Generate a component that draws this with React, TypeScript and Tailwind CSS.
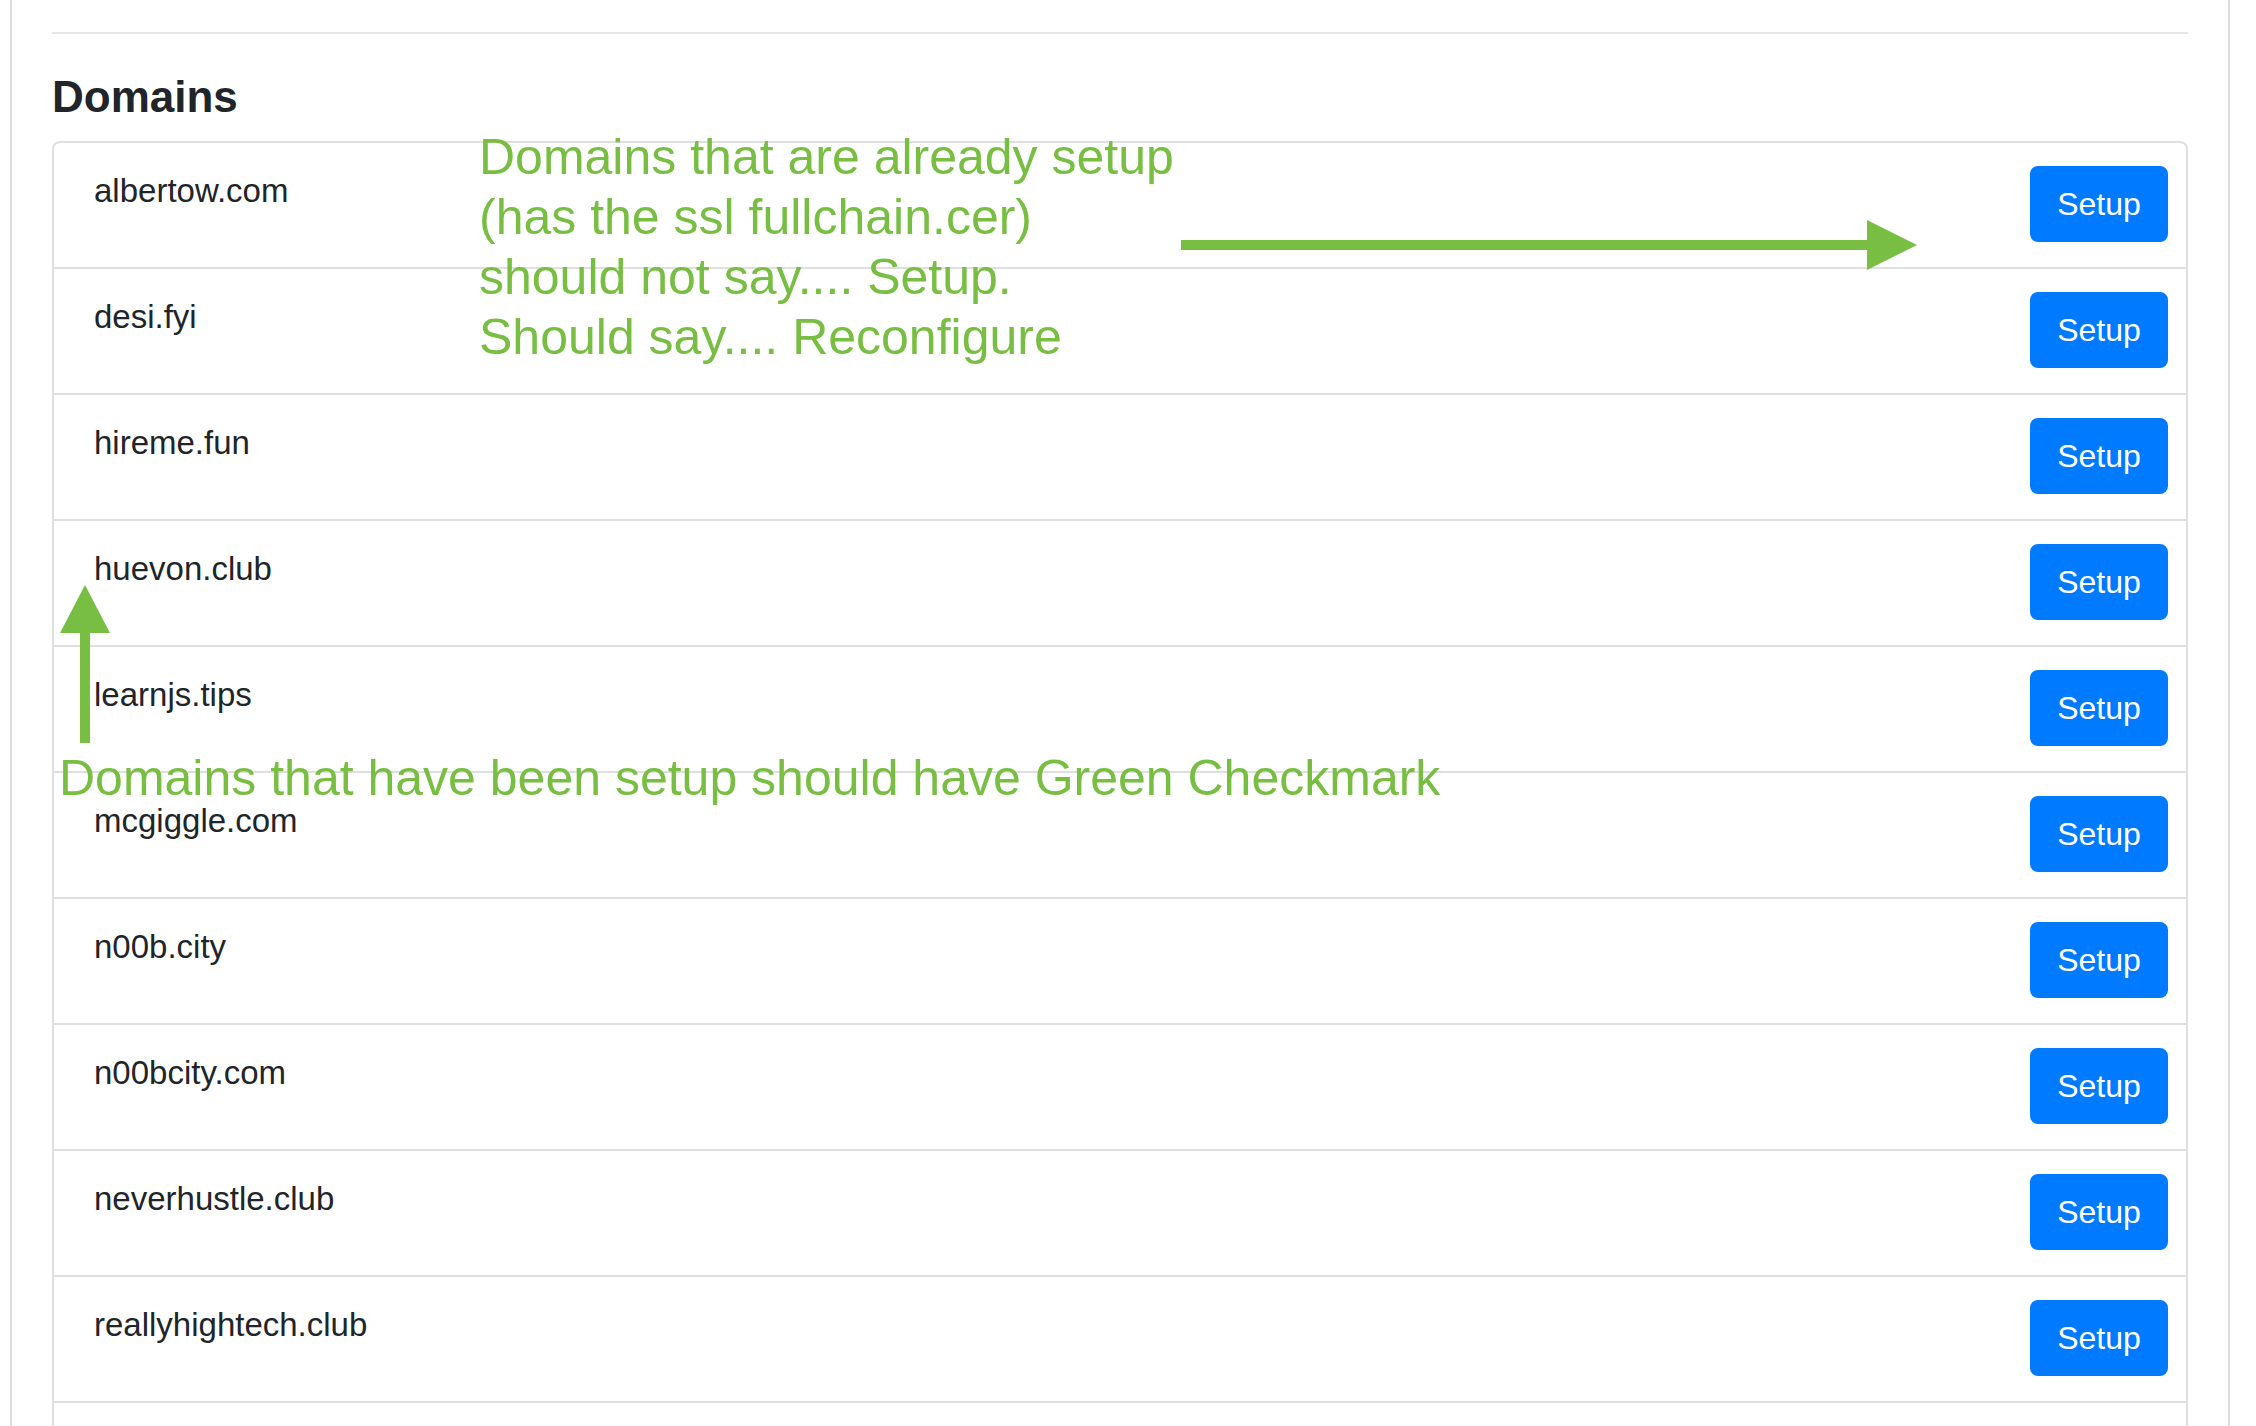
import React from "react";

const domains = [
  "albertow.com",
  "desi.fyi",
  "hireme.fun",
  "huevon.club",
  "learnjs.tips",
  "mcgiggle.com",
  "n00b.city",
  "n00bcity.com",
  "neverhustle.club",
  "reallyhightech.club",
];

const green = "#78be43";

const App = () => {
  return (
    <div className="relative w-full h-[1426px] overflow-hidden bg-white font-['Liberation_Sans',Arial,sans-serif] text-[#212529]">
      <div className="ml-[10px] w-[2220px] min-h-[1426px] border-x-2 border-[#dcdcdc] px-[40px] pt-[32px]">
        <div className="h-[2px] bg-[#e6e6e6]" />

        <h4 className="mt-[37px] text-[44px] leading-[52px] font-bold">Domains</h4>

        {/* domain list */}
        <div className="mt-[18px] rounded-[8px] border-2 border-[#dfdfdf]">
          {domains.map((d) => (
            <div
              key={d}
              className="flex items-start justify-between h-[126px] border-b-2 border-[#dfdfdf] pt-[23px] pl-[40px] pr-[18px]"
            >
              <span className="text-[33px] leading-[48px] pt-px">{d}</span>
              <button className="w-[138px] h-[76px] rounded-[8px] bg-[#007bff] text-white text-[32px] leading-none">
                Setup
              </button>
            </div>
          ))}
          {/* next row, below the fold */}
          <div className="h-[126px] border-b-2 border-[#dfdfdf]" />
        </div>
      </div>

      {/* annotations */}
      <div
        className="absolute left-[479px] top-[127px] text-[50px] leading-[60px] whitespace-nowrap"
        style={{ color: green }}
      >
        <div>Domains that are already setup</div>
        <div>(has the ssl fullchain.cer)</div>
        <div>should not say.... Setup.</div>
        <div>Should say.... Reconfigure</div>
      </div>

      <div
        className="absolute left-[59px] top-[748px] text-[50px] leading-[60px] whitespace-nowrap"
        style={{ color: green }}
      >
        Domains that have been setup should have Green Checkmark
      </div>

      <svg className="absolute left-0 top-0" width="2256" height="1426" viewBox="0 0 2256 1426">
        <rect x="1181" y="240" width="690" height="10" fill={green} />
        <polygon points="1867,220 1917,245 1867,270" fill={green} />
        <rect x="80" y="630" width="10" height="113" fill={green} />
        <polygon points="85,585 110,633 60,633" fill={green} />
      </svg>
    </div>
  );
};

export default App;
